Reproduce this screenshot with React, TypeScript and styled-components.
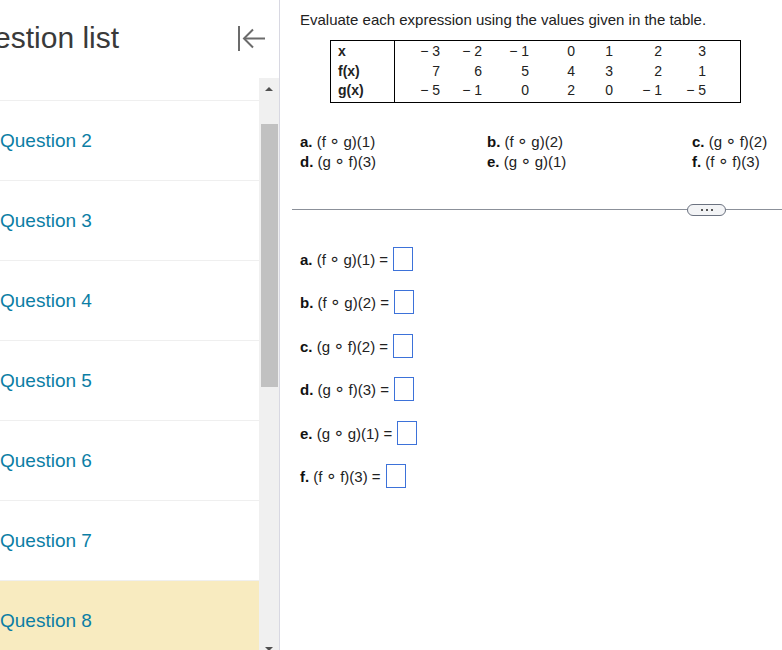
import * as React from 'react'
import styled, { createGlobalStyle } from 'styled-components'

const GlobalStyle = createGlobalStyle`
  html, body {
    margin: 0;
    padding: 0;
    background: #fff;
  }
  body {
    font-family: 'Liberation Sans', Arial, sans-serif;
    color: #222;
  }
`

const Page = styled.div`
  display: flex;
  width: 782px;
  height: 650px;
  overflow: hidden;
`

/* ---------- sidebar ---------- */

const Sidebar = styled.aside`
  width: 279px;
  flex: none;
  border-right: 1px solid #d8d8e2;
  display: flex;
  flex-direction: column;
  overflow: hidden;
`

const SidebarHeader = styled.header`
  height: 78px;
  flex: none;
  display: flex;
  align-items: center;
  justify-content: space-between;
  padding: 0 13px 2px 0;
  box-sizing: border-box;
`

// the panel is scrolled sideways, so the first letters sit left of the edge
const Title = styled.h2`
  margin: 0 0 0 -46px;
  font-size: 30px;
  font-weight: normal;
  color: #3a3a3a;
  white-space: nowrap;
`

const CollapseButton = styled.button`
  border: none;
  background: none;
  padding: 0;
  width: 30px;
  height: 28px;
  display: flex;
  align-items: center;
  justify-content: center;
  color: #6b6b6b;
`

const ListArea = styled.div`
  flex: 1;
  min-height: 0;
  display: flex;
`

const ListViewport = styled.div`
  flex: 1;
  overflow: hidden;
`

// scrolled down: only the bottom of the first entry is still in view
const List = styled.ul`
  list-style: none;
  margin: -57px 0 0 0;
  padding: 0;
`

const Item = styled.li<{ $active?: boolean }>`
  height: 80px;
  box-sizing: border-box;
  border-bottom: 1px solid #efefef;
  background: ${(p) => (p.$active ? '#f8ebc0' : '#fff')};
  display: flex;
  align-items: center;
  padding-top: 1px;
  font-size: 19px;
  color: #0b7ea5;
  white-space: nowrap;
`

const Scrollbar = styled.div`
  width: 20px;
  flex: none;
  background: #f0f0f0;
  display: flex;
  flex-direction: column;
  align-items: center;
  height: 582px;
`

const ArrowButton = styled.div`
  height: 22px;
  flex: none;
  display: flex;
  align-items: center;
  justify-content: center;
`

const Triangle = styled.div<{ $down?: boolean }>`
  width: 0;
  height: 0;
  border-left: 4px solid transparent;
  border-right: 4px solid transparent;
  ${(p) =>
    p.$down ? 'border-top: 4px solid #505050;' : 'border-bottom: 4px solid #505050;'}
`

const Track = styled.div`
  flex: 1;
  width: 100%;
  display: flex;
  flex-direction: column;
`

const Thumb = styled.div<{ $top: number; $size: number }>`
  margin: ${(p) => p.$top}px 1px 0 2px;
  height: ${(p) => p.$size}px;
  background: #c1c1c1;
`

/* ---------- main ---------- */

const Main = styled.main`
  flex: 1;
  min-width: 0;
  padding: 11px 0 0 20px;
  font-size: 15px;
  color: #222;
  overflow: hidden;
`

const Prompt = styled.p`
  margin: 0;
  font-size: 15px;
  line-height: 18px;
  white-space: nowrap;
`

const ValueTable = styled.div`
  margin: 11px 0 0 30px;
  width: 411px;
  box-sizing: border-box;
  border: 1px solid #000;
  display: grid;
  grid-template-columns: 64px 45px 42px 47px 46px 38px 49px 44px 34px;
  font-size: 14px;
  line-height: 19.5px;
  padding: 1px 0 1px;
`

const LabelCell = styled.div`
  font-weight: bold;
  padding-left: 7px;
  border-right: 1px solid #000;
  margin-top: -1px;
  margin-bottom: -1px;
  padding-top: 1px;
`

const ValueCell = styled.div`
  text-align: right;
  white-space: nowrap;
`

const Exercises = styled.div`
  margin-top: 29px;
  display: grid;
  grid-template-columns: 187px 205px auto;
  line-height: 20px;
  white-space: nowrap;
`

const Letter = styled.b`
  font-weight: bold;
  color: #111;
`

const Compose = styled.span`
  font-family: 'DejaVu Sans', sans-serif;
  font-size: 18px;
  line-height: 1;
  margin: 0 -1px;
`

const Divider = styled.div`
  margin: 32px 0 0 -8px;
  display: flex;
  align-items: center;
`

const Rule = styled.div<{ $width?: number }>`
  height: 1px;
  background: #8b9099;
  ${(p) => (p.$width ? `width: ${p.$width}px; flex: none;` : 'flex: 1;')}
`

const MoreButton = styled.button`
  width: 39px;
  height: 12px;
  flex: none;
  border: 1px solid #6b7280;
  border-radius: 6px;
  background: #f3f4f6;
  padding: 0;
  display: flex;
  align-items: center;
  justify-content: center;
  gap: 3px;
`

const Dot = styled.span`
  width: 2px;
  height: 2px;
  background: #555;
`

const Answers = styled.div`
  margin-top: 31px;
  display: flex;
  flex-direction: column;
  gap: 19.5px;
`

const AnswerRow = styled.div`
  display: flex;
  align-items: center;
  gap: 5px;
  white-space: nowrap;
  height: 24px;
`

const AnswerBox = styled.span`
  width: 18px;
  height: 22px;
  border: 1px solid #3d72d9;
  background: #fff;
`

const xs = ['− 3', '− 2', '− 1', '0', '1', '2', '3']
const fs = ['7', '6', '5', '4', '3', '2', '1']
const gs = ['− 5', '− 1', '0', '2', '0', '− 1', '− 5']

const rows: [string, string[]][] = [
  ['x', xs],
  ['f(x)', fs],
  ['g(x)', gs],
]

// [label, outer function, inner function, argument]
const exercises: [string, string, string, number][] = [
  ['a.', 'f', 'g', 1],
  ['b.', 'f', 'g', 2],
  ['c.', 'g', 'f', 2],
  ['d.', 'g', 'f', 3],
  ['e.', 'g', 'g', 1],
  ['f.', 'f', 'f', 3],
]

const Expr = ({ outer, inner, arg }: { outer: string; inner: string; arg: number }) => (
  <>
    ({outer} <Compose>∘</Compose> {inner})({arg})
  </>
)

const CollapseIcon = () => (
  <svg width="30" height="28" viewBox="0 0 30 28" fill="none" stroke="currentColor" strokeWidth="2">
    <path d="M3 2v25" />
    <path d="M8 14.5h21" />
    <path d="M17 5.5l-9 9 9 9" />
  </svg>
)

export default function App() {
  return (
    <>
      <GlobalStyle />
      <Page>
        <Sidebar>
          <SidebarHeader>
            <Title>Question list</Title>
            <CollapseButton aria-label="Collapse question list">
              <CollapseIcon />
            </CollapseButton>
          </SidebarHeader>
          <ListArea>
            <ListViewport>
              <List>
                {[1, 2, 3, 4, 5, 6, 7, 8, 9].map((n) => (
                  <Item key={n} $active={n === 8}>
                    Question {n}
                  </Item>
                ))}
              </List>
            </ListViewport>
            <Scrollbar>
              <ArrowButton>
                <Triangle />
              </ArrowButton>
              <Track>
                <Thumb $top={24} $size={263} />
              </Track>
              <ArrowButton>
                <Triangle $down />
              </ArrowButton>
            </Scrollbar>
          </ListArea>
        </Sidebar>

        <Main>
          <Prompt>Evaluate each expression using the values given in the table.</Prompt>
          <ValueTable>
            {rows.map(([label, values]) => (
              <React.Fragment key={label}>
                <LabelCell>{label}</LabelCell>
                {values.map((v, i) => (
                  <ValueCell key={i}>{v}</ValueCell>
                ))}
                <div />
              </React.Fragment>
            ))}
          </ValueTable>

          <Exercises>
            {exercises.map(([l, o, i, a]) => (
              <div key={l}>
                <Letter>{l}</Letter> <Expr outer={o} inner={i} arg={a} />
              </div>
            ))}
          </Exercises>

          <Divider>
            <Rule $width={395} />
            <MoreButton aria-label="More">
              <Dot />
              <Dot />
              <Dot />
            </MoreButton>
            <Rule />
          </Divider>

          <Answers>
            {exercises.map(([l, o, i, a]) => (
              <AnswerRow key={l}>
                <span>
                  <Letter>{l}</Letter> <Expr outer={o} inner={i} arg={a} /> =
                </span>
                <AnswerBox />
              </AnswerRow>
            ))}
          </Answers>
        </Main>
      </Page>
    </>
  )
}
